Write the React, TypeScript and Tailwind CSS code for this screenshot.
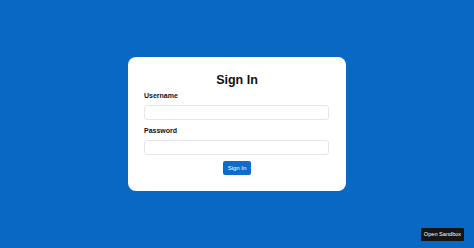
import React from "react";

export default function App() {
  return (
    <div
      className="relative w-full h-[248px] bg-[#0a68c5] flex items-center justify-center overflow-hidden"
      style={{ fontFamily: '"Liberation Sans", Arial, sans-serif' }}
    >
      <div className="w-[218px] h-[134px] bg-white rounded-[8px] px-4 pt-4">
        <h2 className="text-[12.5px] leading-[14px] h-[14px] font-bold text-[#111] text-center">
          Sign In
        </h2>
        <label className="block mt-[5px] text-[7px] leading-[8px] font-bold text-[#111]">
          Username
        </label>
        <input
          type="text"
          className="block mt-[4.5px] w-[185px] h-[15px] border border-[#e6e6e6] rounded-[3px] bg-white outline-none"
        />
        <label className="block mt-[7.5px] text-[7px] leading-[8px] font-bold text-[#111]">
          Password
        </label>
        <input
          type="password"
          className="block mt-[4.5px] w-[185px] h-[15px] border border-[#e6e6e6] rounded-[3px] bg-white outline-none"
        />
        <div className="flex justify-center mt-[6.7px]">
          <button className="h-[14px] w-[28px] bg-[#0b6ecb] text-white text-[6px] leading-[14px] rounded-[2px] text-center">
            Sign In
          </button>
        </div>
      </div>
      <div className="absolute right-[10px] bottom-[7px] h-[13px] w-[43px] bg-[#151515] text-white text-[5.6px] leading-[13px] text-center rounded-[1px]">
        Open Sandbox
      </div>
    </div>
  );
}
